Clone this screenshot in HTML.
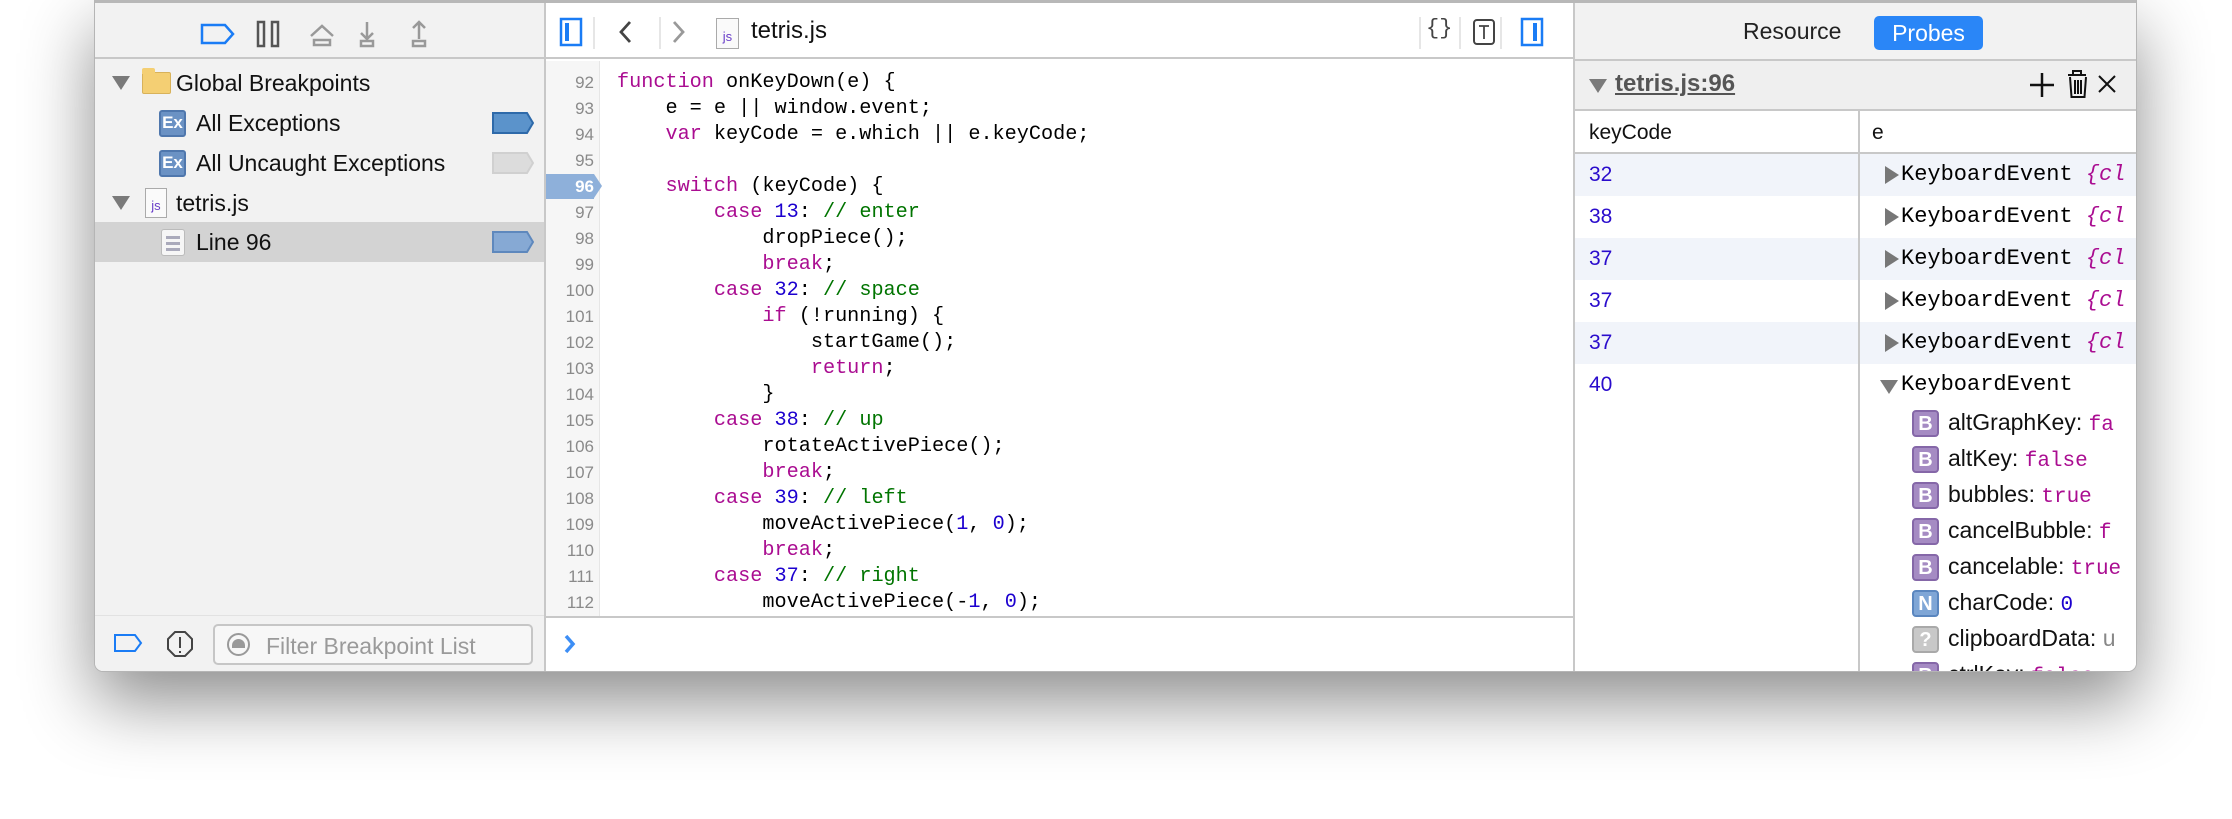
<!DOCTYPE html>
<html><head><meta charset="utf-8"><style>
*{margin:0;padding:0;box-sizing:border-box}
body{width:2232px;height:819px;background:#fff;position:relative;overflow:hidden;font-family:"Liberation Sans",sans-serif}
.abs{position:absolute}
#win{position:absolute;left:94px;top:0;width:2043px;height:672px;background:#fff;border:1px solid #b5b5b5;border-top:3px solid #b8b8b8;border-radius:0 0 9px 9px;box-shadow:0 30px 70px rgba(0,0,0,.45);overflow:hidden}
.mono{font-family:"Liberation Mono",monospace}
.k{color:#aa0d91}.n{color:#1c00cf}.c{color:#007400}
.row{position:absolute;left:0;right:0;height:40px;line-height:40px;font-size:23px;color:#111}
.tri{position:absolute;width:0;height:0;border-left:9px solid transparent;border-right:9px solid transparent;border-top:14px solid #7a7a7a}
.rt{position:absolute;width:0;height:0;border-top:9px solid transparent;border-bottom:9px solid transparent;border-left:14px solid #777}
.bp{position:absolute;left:397px;width:42px;height:22px}
.ic{position:absolute;left:337px;width:27px;height:27px;border-radius:4px;color:#fff;font-size:20px;line-height:24px;text-align:center;font-weight:bold}
</style></head><body>
<div id="win">
<div class="abs" style="left:0;top:0;width:451px;height:672px;background:#f2f2f2;border-right:2px solid #c8c8c8">
 <div class="abs" style="left:0;top:0;right:0;height:56px;border-bottom:2px solid #c8c8c8"></div>
 <svg class="abs" style="left:105px;top:16px" width="260" height="30" viewBox="0 0 260 30" fill="none" stroke-width="2.5">
  <path d="M2 6h23l8 9-8 9H2z" stroke="#1a7cf5"/>
  <rect x="58" y="3" width="6" height="24" stroke="#555"/><rect x="72" y="3" width="6" height="24" stroke="#555"/>
  <path d="M111 17l11-10 11 10M114 21h16v5h-16z" stroke="#999"/>
  <path d="M167 3v17M161 14l6 6 6-6M161 22h12v5h-12z" stroke="#999"/>
  <path d="M219 20V3M213 9l6-6 6 6M213 22h12v5h-12z" stroke="#999"/>
 </svg>
 <div class="row" style="top:60px"><div class="tri" style="left:17px;top:13px"></div>
  <div class="abs" style="left:47px;top:9px;width:29px;height:22px;background:#f4cf73;border:1px solid #d8b25a;border-radius:2px"></div>
  <div class="abs" style="left:47px;top:5px;width:13px;height:6px;background:#f4cf73;border-radius:2px 2px 0 0"></div>
  <span class="abs" style="left:81px">Global Breakpoints</span></div>
 <div class="row" style="top:100px">
  <div class="abs" style="left:64px;top:7px;width:27px;height:27px;background:#6b92c4;border:2px solid #4f77ad;border-radius:3px;color:#fff;font-size:17px;line-height:22px;text-align:center;font-weight:bold">Ex</div>
  <span class="abs" style="left:101px">All Exceptions</span>
  <svg class="bp" style="top:9px" viewBox="0 0 42 22"><path d="M1 1h34l6 10-6 10H1z" fill="#5b93cb" stroke="#2e6aaa" stroke-width="2"/></svg></div>
 <div class="row" style="top:140px">
  <div class="abs" style="left:64px;top:7px;width:27px;height:27px;background:#6b92c4;border:2px solid #4f77ad;border-radius:3px;color:#fff;font-size:17px;line-height:22px;text-align:center;font-weight:bold">Ex</div>
  <span class="abs" style="left:101px">All Uncaught Exceptions</span>
  <svg class="bp" style="top:9px" viewBox="0 0 42 22"><path d="M1 1h34l6 10-6 10H1z" fill="#dcdcdc" stroke="#d0d0d0" stroke-width="2"/></svg></div>
 <div class="row" style="top:180px"><div class="tri" style="left:17px;top:13px"></div>
  <div class="abs" style="left:50px;top:5px;width:22px;height:30px;background:#fafafa;border:1px solid #aaa;font-size:13px;color:#6a3fc9;text-align:center;line-height:34px">js</div>
  <span class="abs" style="left:81px">tetris.js</span></div>
 <div class="row" style="top:219px;background:#d3d3d3">
  <div class="abs" style="left:66px;top:7px;width:24px;height:27px;background:#f6f6f6;border:1px solid #bbb;border-radius:3px"><div style="margin:6px 4px;height:3px;background:#aab;box-shadow:0 6px 0 #aab,0 12px 0 #aab"></div></div>
  <span class="abs" style="left:101px">Line 96</span>
  <svg class="bp" style="top:9px" viewBox="0 0 42 22"><path d="M1 1h34l6 10-6 10H1z" fill="#86a9d4" stroke="#5e88bd" stroke-width="2"/></svg></div>
 <div class="abs" style="left:0;right:0;top:612px;height:1px;background:#e2e2e2"></div>
 <svg class="abs" style="left:18px;top:626px" width="90" height="30" viewBox="0 0 90 30" fill="none" stroke-width="2">
  <path d="M2 6h20l6 8-6 8H2z" stroke="#1a7cf5"/>
  <path d="M62 3h10l7 7v10l-7 7H62l-7-7V10z" stroke="#444"/><path d="M67 8v11M67 22v2" stroke="#444"/>
 </svg>
 <div class="abs" style="left:118px;top:621px;width:320px;height:41px;border:2px solid #c6c6c6;border-radius:5px;background:#f7f7f7">
  <div class="abs" style="left:12px;top:7px;width:23px;height:23px;border:2px solid #999;border-radius:50%;overflow:hidden"><div style="margin:4px 3px;height:9px;background:#999;border-radius:9px 9px 0 0"></div></div>
  <span class="abs" style="left:51px;top:7px;font-size:23px;color:#9a9a9a">Filter Breakpoint List</span>
 </div>
</div>
<div class="abs" style="left:451px;top:0;width:1027px;height:672px;background:#fff">
 <div class="abs" style="left:0;right:0;top:0;height:56px;border-bottom:2px solid #c8c8c8"></div>
 <svg class="abs" style="left:0;top:10px" width="1027" height="40" viewBox="0 0 1027 40" fill="none">
  <rect x="15" y="6" width="20" height="26" stroke="#1a7cf5" stroke-width="2.5"/><rect x="19" y="10" width="4" height="18" fill="#1a7cf5"/>
  <path d="M48 4v32M114 4v32" stroke="#ddd" stroke-width="1.5"/>
  <path d="M84 9l-9 10 9 10" stroke="#444" stroke-width="2.8"/>
  <path d="M128 9l9 10-9 10" stroke="#999" stroke-width="2.8"/>
  <path d="M874 4v32M914 4v32M955 4v32" stroke="#ddd" stroke-width="1.5"/>
  <rect x="976" y="6" width="20" height="26" stroke="#1a7cf5" stroke-width="2.5"/><rect x="987" y="10" width="4" height="18" fill="#1a7cf5"/>
  <rect x="928" y="7" width="20" height="24" rx="3" stroke="#444" stroke-width="2"/><path d="M933 13h10M938 13v13" stroke="#444" stroke-width="1.8"/>
 </svg>
 <span class="abs mono" style="left:880px;top:13px;font-size:22px;color:#444">{}</span>
 <div class="abs" style="left:170px;top:15px;width:23px;height:31px;background:#fafafa;border:1px solid #aaa;font-size:13px;color:#6a3fc9;text-align:center;line-height:36px">js</div>
 <span class="abs" style="left:205px;top:14px;font-size:24px;color:#111">tetris.js</span>
 <div class="abs" style="left:0;top:58px;width:54px;height:555px;background:#f6f6f6;border-right:1px solid #e6e6e6"></div>
 <div class="abs" style="left:0;top:171px;width:48px;height:25px;background:#8eb0da"></div>
 <div class="abs" style="left:48px;top:171px;width:0;height:0;border-top:12.5px solid transparent;border-bottom:12.5px solid transparent;border-left:8px solid #8eb0da"></div>
 <pre class="abs" style="left:0;top:67px;width:48px;text-align:right;font:17px/26px 'Liberation Sans',sans-serif;color:#8a8a8a">92
93
94
95
<b style="color:#fff">96</b>
97
98
99
100
101
102
103
104
105
106
107
108
109
110
111
112</pre>
 <pre class="abs mono" style="left:71px;top:67px;font-size:20.2px;line-height:26px;color:#000"><span class="k">function</span> onKeyDown(e) {
    e = e || window.event;
    <span class="k">var</span> keyCode = e.which || e.keyCode;

    <span class="k">switch</span> (keyCode) {
        <span class="k">case</span> <span class="n">13</span>: <span class="c">// enter</span>
            dropPiece();
            <span class="k">break</span>;
        <span class="k">case</span> <span class="n">32</span>: <span class="c">// space</span>
            <span class="k">if</span> (!running) {
                startGame();
                <span class="k">return</span>;
            }
        <span class="k">case</span> <span class="n">38</span>: <span class="c">// up</span>
            rotateActivePiece();
            <span class="k">break</span>;
        <span class="k">case</span> <span class="n">39</span>: <span class="c">// left</span>
            moveActivePiece(<span class="n">1</span>, <span class="n">0</span>);
            <span class="k">break</span>;
        <span class="k">case</span> <span class="n">37</span>: <span class="c">// right</span>
            moveActivePiece(-<span class="n">1</span>, <span class="n">0</span>);</pre>
 <div class="abs" style="left:0;right:0;top:613px;height:59px;background:#fff;border-top:2px solid #c8c8c8"></div>
 <svg class="abs" style="left:16px;top:630px" width="16" height="22" viewBox="0 0 16 22"><path d="M4 3l7 8-7 8" stroke="#3d8ef5" stroke-width="3.5" fill="none"/></svg>
</div>
<div class="abs" style="left:1478px;top:0;width:565px;height:672px;background:#fff;border-left:2px solid #c8c8c8">
 <div class="abs" style="left:0;right:0;top:0;height:58px;background:#f2f2f2;border-bottom:2px solid #c8c8c8"></div>
 <span class="abs" style="left:168px;top:15px;font-size:23px;color:#222">Resource</span>
 <div class="abs" style="left:299px;top:13px;width:109px;height:34px;background:#2a86f7;border-radius:5px;color:#fff;font-size:23px;text-align:center;line-height:34px">Probes</div>
 <div class="abs" style="left:0;right:0;top:58px;height:50px;background:#efefef;border-bottom:2px solid #c8c8c8"></div>
 <div class="tri" style="left:14px;top:76px"></div>
 <span class="abs" style="left:40px;top:67px;font-size:24px;font-weight:bold;color:#555;text-decoration:underline">tetris.js:96</span>
 <svg class="abs" style="left:455px;top:64px" width="100" height="36" viewBox="0 0 100 36" fill="none">
  <path d="M12 6v24M0 18h24" stroke="#111" stroke-width="2.5"/>
  <path d="M38 8h18M43 8V4h8v4M40 10l1.5 20h13l1.5-20M45 13v14M48 13v14M51 13v14" stroke="#111" stroke-width="2"/>
  <path d="M69 9l16 16M85 9L69 25" stroke="#111" stroke-width="2"/>
 </svg>
 <div class="abs" style="left:0;right:0;top:108px;height:43px;border-bottom:2px solid #c8c8c8"></div>
 <span class="abs" style="left:14px;top:118px;font-size:21px;color:#111">keyCode</span>
 <span class="abs" style="left:297px;top:118px;font-size:21px;color:#111">e</span>
 <div class="abs" style="left:0;right:0;top:151px;height:42px;background:#f1f4fa"></div>
 <div class="abs" style="left:0;right:0;top:235px;height:42px;background:#f1f4fa"></div>
 <div class="abs" style="left:0;right:0;top:319px;height:42px;background:#f1f4fa"></div>
 <div class="abs" style="left:283px;top:108px;width:2px;height:564px;background:#c8c8c8"></div>
 <div style="position:absolute;left:14px;top:151px;font-size:21px;color:#2a0ccc;line-height:42px">32<br>38<br>37<br>37<br>37<br>40</div>
 <div class="rt" style="left:310px;top:163px"></div>
 <div class="rt" style="left:310px;top:205px"></div>
 <div class="rt" style="left:310px;top:247px"></div>
 <div class="rt" style="left:310px;top:289px"></div>
 <div class="rt" style="left:310px;top:331px"></div>
 <div class="tri" style="left:305px;top:377px"></div>
 <div class="abs mono" style="left:326px;top:151px;font-size:22px;line-height:42px;color:#000;white-space:pre">KeyboardEvent <i style="color:#aa0d91">{cl</i>
KeyboardEvent <i style="color:#aa0d91">{cl</i>
KeyboardEvent <i style="color:#aa0d91">{cl</i>
KeyboardEvent <i style="color:#aa0d91">{cl</i>
KeyboardEvent <i style="color:#aa0d91">{cl</i>
KeyboardEvent</div>
 <div class="abs" style="left:0;top:402px;width:565px;height:270px;font-size:23px;color:#111;white-space:nowrap">
  <div class="ic" style="top:5px;background:#a58bc3;border:2px solid #8567a8">B</div><span class="abs" style="left:373px;top:4px">altGraphKey: <span class="mono k" style="font-size:21px">fa</span></span>
  <div class="ic" style="top:41px;background:#a58bc3;border:2px solid #8567a8">B</div><span class="abs" style="left:373px;top:40px">altKey: <span class="mono k" style="font-size:21px">false</span></span>
  <div class="ic" style="top:77px;background:#a58bc3;border:2px solid #8567a8">B</div><span class="abs" style="left:373px;top:76px">bubbles: <span class="mono k" style="font-size:21px">true</span></span>
  <div class="ic" style="top:113px;background:#a58bc3;border:2px solid #8567a8">B</div><span class="abs" style="left:373px;top:112px">cancelBubble: <span class="mono k" style="font-size:21px">f</span></span>
  <div class="ic" style="top:149px;background:#a58bc3;border:2px solid #8567a8">B</div><span class="abs" style="left:373px;top:148px">cancelable: <span class="mono k" style="font-size:21px">true</span></span>
  <div class="ic" style="top:185px;background:#7fa6d6;border:2px solid #5a86bf">N</div><span class="abs" style="left:373px;top:184px">charCode: <span class="mono n" style="font-size:21px">0</span></span>
  <div class="ic" style="top:221px;background:#c8c8c8;border:2px solid #a9a9a9">?</div><span class="abs" style="left:373px;top:220px">clipboardData: <span style="color:#888">u</span></span>
  <div class="ic" style="top:257px;background:#a58bc3;border:2px solid #8567a8">B</div><span class="abs" style="left:373px;top:256px">ctrlKey: <span class="mono k" style="font-size:21px">false</span></span>
 </div>
</div>
</div>
</body></html>
